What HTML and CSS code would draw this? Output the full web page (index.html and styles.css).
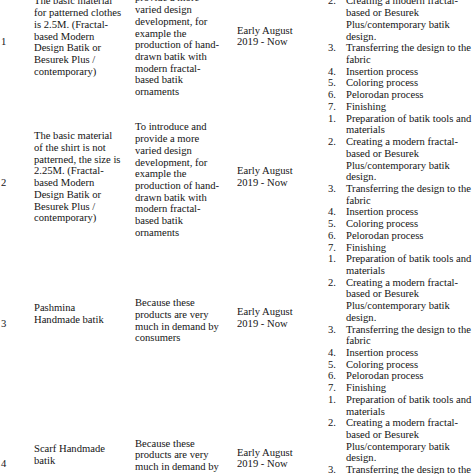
FILE: index.html
```html
<!DOCTYPE html>
<html lang="en">
<head>
<meta charset="utf-8">
<title>Batik products</title>
<link rel="stylesheet" href="styles.css">
</head>
<body>
<div class="table">
  <div class="row">
    <div class="num">1</div>
    <div class="cell c2">The basic material for patterned clothes is 2.5M. (Fractal-based Modern Design Batik or Besurek Plus / contemporary)</div>
    <div class="cell c3">To introduce and provide a more varied design development, for example the production of hand-drawn batik with modern fractal-based batik ornaments</div>
    <div class="cell c4">Early August 2019 - Now</div>
    <ol class="steps">
      <li><span class="m">1.</span><span>Preparation of batik tools and materials</span></li>
      <li><span class="m">2.</span><span>Creating a modern fractal-based or Besurek Plus/contemporary batik design.</span></li>
      <li><span class="m">3.</span><span>Transferring the design to the fabric</span></li>
      <li><span class="m">4.</span><span>Insertion process</span></li>
      <li><span class="m">5.</span><span>Coloring process</span></li>
      <li><span class="m">6.</span><span>Pelorodan process</span></li>
      <li><span class="m">7.</span><span>Finishing</span></li>
    </ol>
  </div>
  <div class="row">
    <div class="num">2</div>
    <div class="cell c2">The basic material of the shirt is not patterned, the size is 2.25M. (Fractal-based Modern Design Batik or Besurek Plus / contemporary)</div>
    <div class="cell c3">To introduce and provide a more varied design development, for example the production of hand-drawn batik with modern fractal-based batik ornaments</div>
    <div class="cell c4">Early August 2019 - Now</div>
    <ol class="steps">
      <li><span class="m">1.</span><span>Preparation of batik tools and materials</span></li>
      <li><span class="m">2.</span><span>Creating a modern fractal-based or Besurek Plus/contemporary batik design.</span></li>
      <li><span class="m">3.</span><span>Transferring the design to the fabric</span></li>
      <li><span class="m">4.</span><span>Insertion process</span></li>
      <li><span class="m">5.</span><span>Coloring process</span></li>
      <li><span class="m">6.</span><span>Pelorodan process</span></li>
      <li><span class="m">7.</span><span>Finishing</span></li>
    </ol>
  </div>
  <div class="row">
    <div class="num">3</div>
    <div class="cell c2 short">Pashmina Handmade batik</div>
    <div class="cell c3">Because these products are very much in demand by consumers</div>
    <div class="cell c4">Early August 2019 - Now</div>
    <ol class="steps">
      <li><span class="m">1.</span><span>Preparation of batik tools and materials</span></li>
      <li><span class="m">2.</span><span>Creating a modern fractal-based or Besurek Plus/contemporary batik design.</span></li>
      <li><span class="m">3.</span><span>Transferring the design to the fabric</span></li>
      <li><span class="m">4.</span><span>Insertion process</span></li>
      <li><span class="m">5.</span><span>Coloring process</span></li>
      <li><span class="m">6.</span><span>Pelorodan process</span></li>
      <li><span class="m">7.</span><span>Finishing</span></li>
    </ol>
  </div>
  <div class="row">
    <div class="num">4</div>
    <div class="cell c2 short">Scarf Handmade batik</div>
    <div class="cell c3">Because these products are very much in demand by consumers</div>
    <div class="cell c4">Early August 2019 - Now</div>
    <ol class="steps">
      <li><span class="m">1.</span><span>Preparation of batik tools and materials</span></li>
      <li><span class="m">2.</span><span>Creating a modern fractal-based or Besurek Plus/contemporary batik design.</span></li>
      <li><span class="m">3.</span><span>Transferring the design to the fabric</span></li>
      <li><span class="m">4.</span><span>Insertion process</span></li>
      <li><span class="m">5.</span><span>Coloring process</span></li>
      <li><span class="m">6.</span><span>Pelorodan process</span></li>
      <li><span class="m">7.</span><span>Finishing</span></li>
    </ol>
  </div>
</div>
</body>
</html>
```

FILE: styles.css
```css
html, body {
  margin: 0;
  padding: 0;
  background: #ffffff;
  overflow: hidden;
}

body {
  width: 474px;
  height: 474px;
  font-family: "Liberation Serif", "Times New Roman", serif;
  font-size: 10.6px;
  line-height: 11.72px;
  color: #141414;
}

.table {
  margin-top: -28px;
  display: flex;
  flex-direction: column;
}

.row {
  display: grid;
  grid-template-columns: 34px 101px 102px 90px 150px;
  align-items: center;
}

.num {
  padding-left: 1px;
}

.cell {
  padding-bottom: 11.72px;
}

.c2 {
  padding-right: 12.5px;
}

.c2.short {
  padding-bottom: 19px;
}

.c3 {
  padding-right: 15px;
  padding-bottom: 6px;
}

.c4 {
  padding-right: 20px;
}

.steps {
  list-style: none;
  margin: 0;
  padding: 0;
}

.steps li {
  display: grid;
  grid-template-columns: 19px 131px;
}

.steps .m {
  padding-left: 1px;
}
```
